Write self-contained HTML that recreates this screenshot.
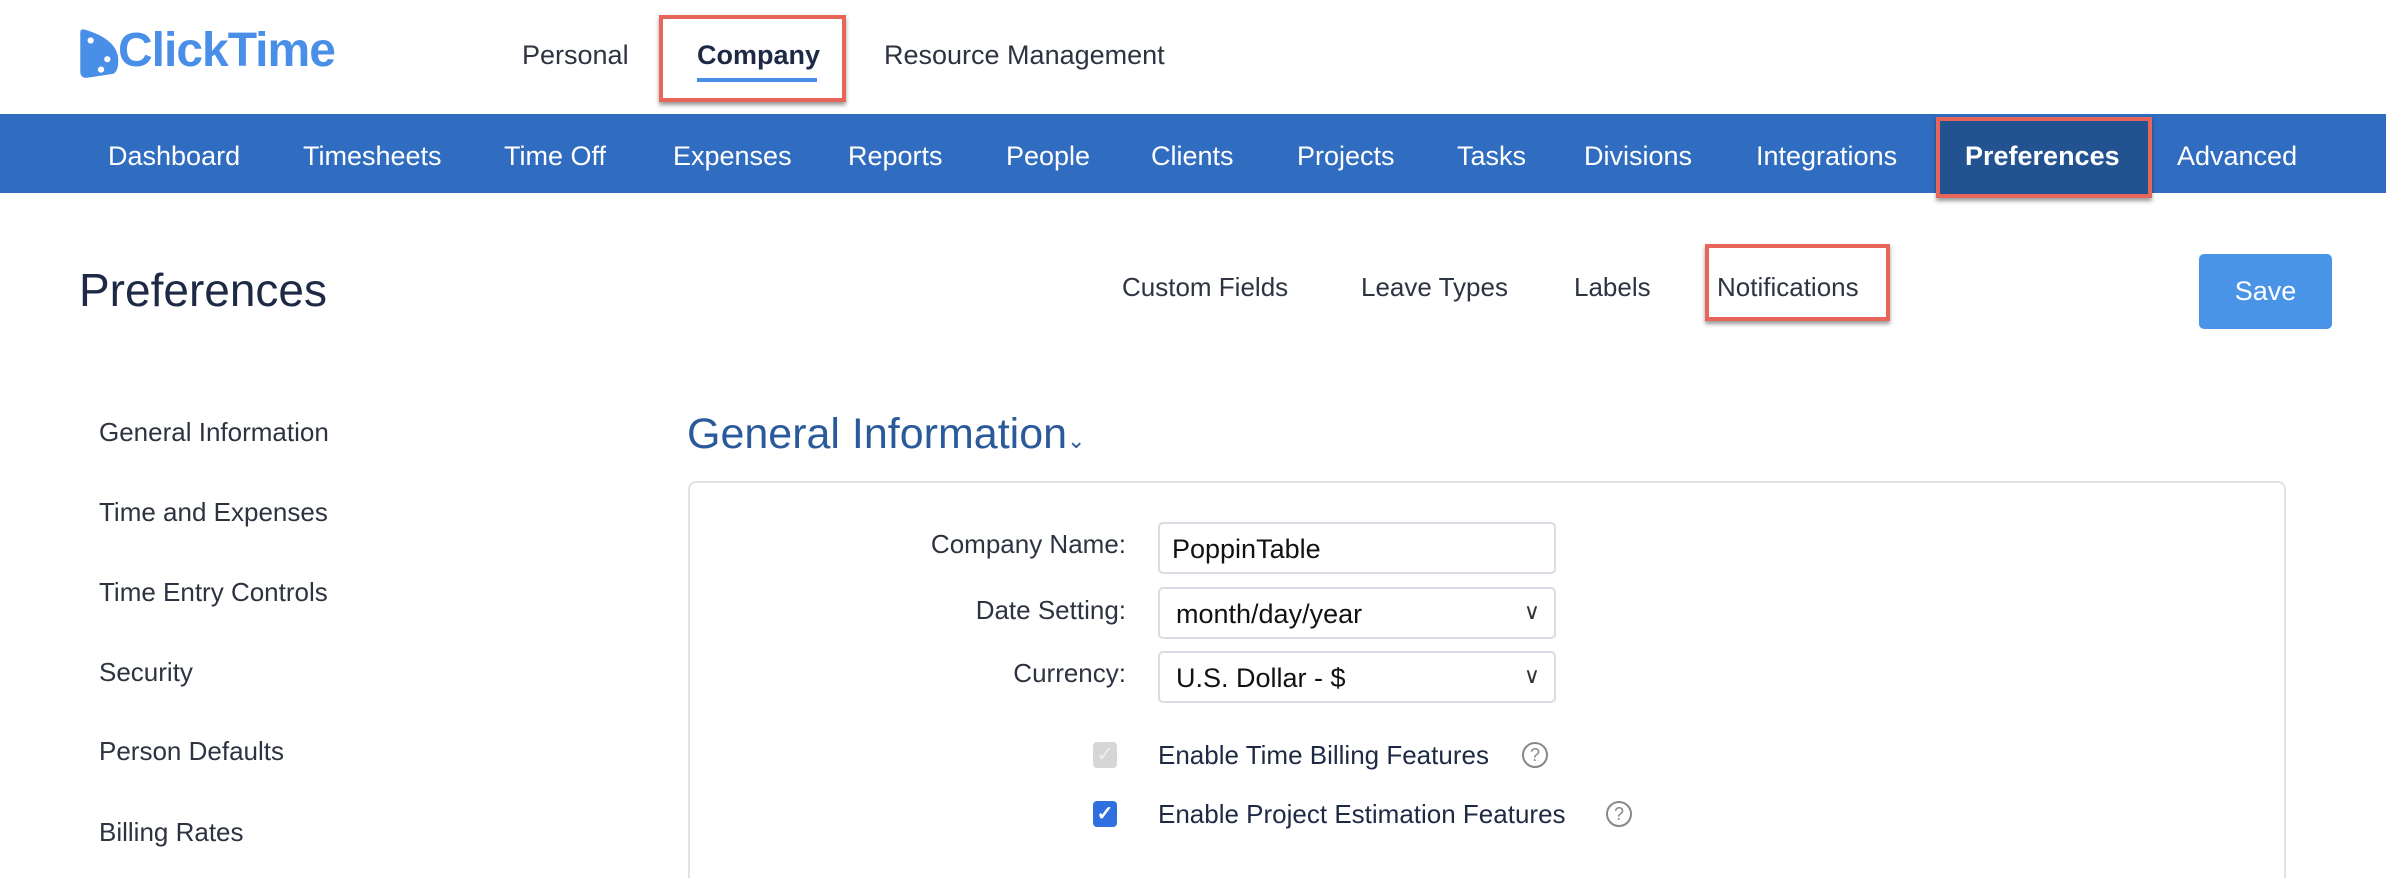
<!DOCTYPE html>
<html style="overflow:hidden;height:878px"><head><meta charset="utf-8"><style>
*{box-sizing:border-box;margin:0;padding:0}
body{width:2386px;height:878px;overflow:hidden;background:#fff;font-family:"Liberation Sans",sans-serif;color:#2d3340;position:relative}
.a{position:absolute;white-space:nowrap}
.top{font-size:27px;top:40px;color:#2d3340}
.bar{position:absolute;left:0;top:114px;width:2386px;height:79px;background:#306cc0}
.nv{position:absolute;top:141px;font-size:27px;color:#fff}
.sub{font-size:26px;top:272px;color:#2d3340}
.lm{font-size:26px;left:99px;color:#2d3340}
.lb{font-size:26px;color:#2d3340;right:1260px}
.inp{position:absolute;left:1158px;width:398px;height:52px;border:2px solid #d9dde3;border-radius:5px;font-size:27px;padding:10px 12px;color:#111}
.chev{position:absolute;right:14px;top:10px;font-size:22px;color:#333}
.help{position:absolute;width:26px;height:26px;border:2px solid #888;border-radius:50%;font-size:18px;color:#888;text-align:center;line-height:22px}
</style></head><body>
<svg class="a" style="left:78px;top:28px" width="42" height="52" viewBox="0 0 40 50"><path d="M2 4 Q2 0 8 2 Q34 10 38 26 Q40 40 34 44 L8 48 Q2 48 2 42 Z" fill="#4a8fe7"/><circle cx="12" cy="12" r="3" fill="#fff"/><circle cx="28" cy="30" r="3" fill="#fff"/><circle cx="22" cy="40" r="3" fill="#fff"/></svg>
<div class="a" style="left:118px;top:23px;font-size:48px;font-weight:bold;color:#4a8fe7;letter-spacing:-1px">ClickTime</div>
<div class="a top" style="left:522px">Personal</div>
<div class="a top" style="left:697px;font-weight:bold;color:#1e2a45">Company</div>
<div class="a" style="left:697px;top:78px;width:120px;height:4px;background:#4a8fe7"></div>
<div class="a" style="left:659px;top:15px;width:187px;height:87px;border:4px solid #e8655a;box-shadow:0 3px 4px rgba(0,0,0,.4)"></div>
<div class="a top" style="left:884px">Resource Management</div>
<div class="bar"></div>
<div class="a" style="left:1936px;top:117px;width:216px;height:81px;background:#22528f;border:4px solid #e8655a;box-shadow:0 3px 4px rgba(0,0,0,.4)"></div>
<div class="nv" style="left:108px">Dashboard</div>
<div class="nv" style="left:303px">Timesheets</div>
<div class="nv" style="left:504px">Time Off</div>
<div class="nv" style="left:673px">Expenses</div>
<div class="nv" style="left:848px">Reports</div>
<div class="nv" style="left:1006px">People</div>
<div class="nv" style="left:1151px">Clients</div>
<div class="nv" style="left:1297px">Projects</div>
<div class="nv" style="left:1457px">Tasks</div>
<div class="nv" style="left:1584px">Divisions</div>
<div class="nv" style="left:1756px">Integrations</div>
<div class="nv" style="left:1965px;font-weight:bold">Preferences</div>
<div class="nv" style="left:2177px">Advanced</div>
<div class="a" style="left:79px;top:263px;font-size:46px;color:#1e2a45">Preferences</div>
<div class="a sub" style="left:1122px">Custom Fields</div>
<div class="a sub" style="left:1361px">Leave Types</div>
<div class="a sub" style="left:1574px">Labels</div>
<div class="a sub" style="left:1717px">Notifications</div>
<div class="a" style="left:1705px;top:244px;width:185px;height:77px;border:4px solid #e8655a;box-shadow:0 3px 4px rgba(0,0,0,.4)"></div>
<div class="a" style="left:2199px;top:254px;width:133px;height:75px;background:#4a94e8;border-radius:5px;color:#fff;font-size:27px;text-align:center;line-height:75px">Save</div>
<div class="a lm" style="top:417px">General Information</div>
<div class="a lm" style="top:497px">Time and Expenses</div>
<div class="a lm" style="top:577px">Time Entry Controls</div>
<div class="a lm" style="top:657px">Security</div>
<div class="a lm" style="top:736px">Person Defaults</div>
<div class="a lm" style="top:817px">Billing Rates</div>
<div class="a" style="left:687px;top:410px;font-size:43px;color:#2a5a9a">General Information<span style="font-size:22px">&#x2304;</span></div>
<div class="a" style="left:688px;top:481px;width:1598px;height:397px;border:2px solid #dfe2e6;border-bottom:none;border-radius:8px 8px 0 0"></div>
<div class="a lb" style="top:529px">Company Name:</div>
<div class="a lb" style="top:595px">Date Setting:</div>
<div class="a lb" style="top:658px">Currency:</div>
<div class="inp" style="top:522px">PoppinTable</div>
<div class="inp" style="top:587px;padding-left:16px">month/day/year<span class="chev">&#x2228;</span></div>
<div class="inp" style="top:651px;padding-left:16px">U.S. Dollar - $<span class="chev">&#x2228;</span></div>
<div class="a" style="left:1093px;top:742px;width:24px;height:26px;background:#d6d6d6;border-radius:4px;color:#eee;font-size:20px;text-align:center;line-height:26px">&#x2713;</div>
<div class="a" style="left:1093px;top:801px;width:24px;height:26px;background:#2f6fe0;border-radius:4px;color:#fff;font-size:20px;text-align:center;line-height:26px;font-weight:bold">&#x2713;</div>
<div class="a" style="left:1158px;top:740px;font-size:26px;color:#1e2a45">Enable Time Billing Features</div>
<div class="a" style="left:1158px;top:799px;font-size:26px;color:#1e2a45">Enable Project Estimation Features</div>
<div class="help" style="left:1522px;top:742px">?</div>
<div class="help" style="left:1606px;top:801px">?</div>
</body></html>
